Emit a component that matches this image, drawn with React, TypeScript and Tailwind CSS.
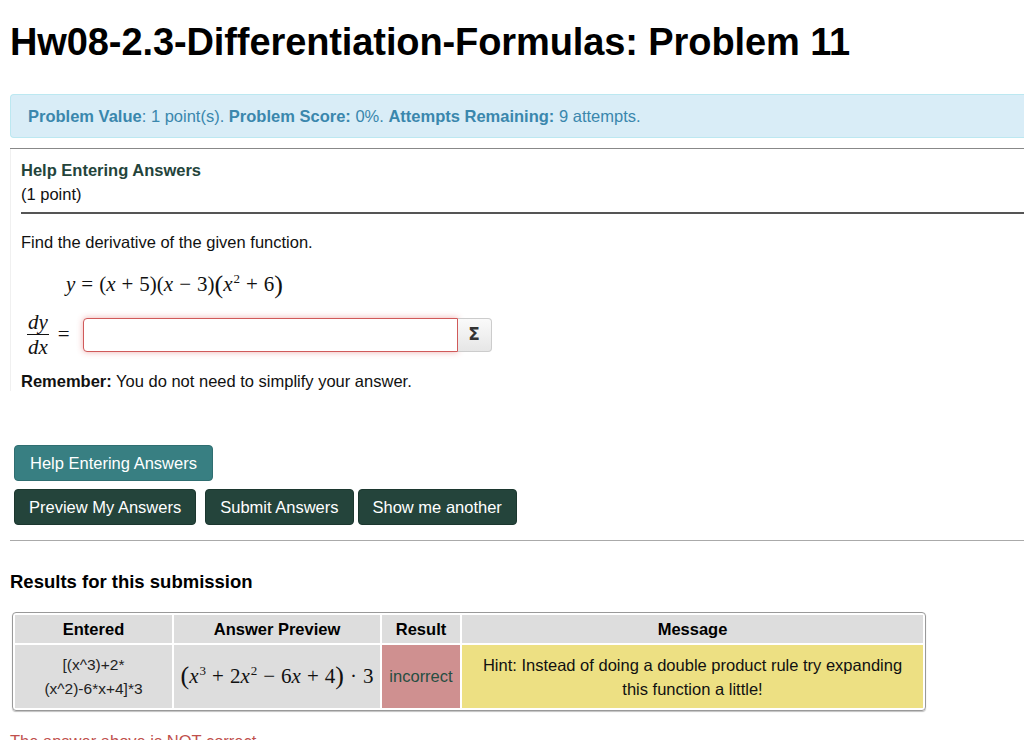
import React from 'react'

const serif = "font-['Liberation_Serif',serif]"

function V({ children }: { children: React.ReactNode }) {
  return <i className="italic">{children}</i>
}

function Sup({ children }: { children: React.ReactNode }) {
  return <span className="text-[13px] align-[8px] ml-[1px] leading-none">{children}</span>
}

function Op({ children }: { children: React.ReactNode }) {
  return <span className="mx-[6px]">{children}</span>
}

function Big({ children }: { children: React.ReactNode }) {
  return <span className="text-[26px] leading-none relative top-[1px]">{children}</span>
}

export default function App() {
  return (
    <div className="min-h-screen bg-white font-['Liberation_Sans',Arial,sans-serif] text-[16.5px] text-[#222] overflow-hidden">
      <h1 className="px-[10px] pt-[20px] text-[38px] leading-[44px] font-bold text-black tracking-[-0.1px]">
        Hw08-2.3-Differentiation-Formulas: Problem 11
      </h1>

      {/* score bar */}
      <div className="ml-[10px] mt-[30px] h-[44px] flex items-center pl-[17px] bg-[#d9edf7] border border-[#bce8f1] rounded-l-[4px] border-r-0 text-[#3a87ad]">
        <span>
          <b>Problem Value</b>: 1 point(s). <b>Problem Score:</b> 0%. <b>Attempts Remaining:</b> 9 attempts.
        </span>
      </div>

      <div className="ml-[10px] mt-[10px] border-t border-[#888]" />

      {/* problem body */}
      <div className="ml-[10px] border-l border-[#f0f0f0] pl-[10px] pt-[9px]">
        <div className="font-bold text-[#24443b] leading-[24px]">Help Entering Answers</div>
        <div className="leading-[24px] text-[#111]">(1 point)</div>
        <div className="mt-[6px] border-t-2 border-[#555]" />

        <div className="pt-[18px] text-[#111]">
          <p className="leading-[20px]">Find the derivative of the given function.</p>

          <div className={`${serif} mt-[19px] ml-[45px] text-[21px] leading-[24px] flex items-center text-[#111] whitespace-nowrap`}>
            <V>y</V>
            <Op>=</Op>
            <span>(<V>x</V><Op>+</Op>5)(<V>x</V><Op>−</Op>3)</span>
            <Big>(</Big>
            <span><V>x</V><Sup>2</Sup><Op>+</Op>6</span>
            <Big>)</Big>
          </div>

          <div className="mt-[14px] flex items-center">
            <div className={`${serif} ml-[6px] flex flex-col items-center text-[21px] italic leading-[22px] text-[#111]`}>
              <span className="px-[1px] pb-[1px] border-b border-[#111]">dy</span>
              <span className="pt-[1px]">dx</span>
            </div>
            <span className={`${serif} text-[21px] ml-[9px] mr-[13px]`}>=</span>
            <div className="w-[375px] h-[34px] border border-[#d05a5a] rounded-l-[4px] bg-white shadow-[0_0_6px_rgba(220,80,80,0.45)]" />
            <div className="w-[34px] h-[34px] flex items-center justify-center border border-[#ccc] border-l-0 rounded-r-[4px] bg-gradient-to-b from-[#fafafa] to-[#e6e6e6]">
              <span className="font-['DejaVu_Sans',sans-serif] font-bold text-[17px] text-[#333]">Σ</span>
            </div>
          </div>

          <p className="mt-[13px] leading-[20px]"><b>Remember:</b> You do not need to simplify your answer.</p>
        </div>
      </div>

      {/* buttons */}
      <div className="pl-[14px] mt-[54px]">
        <button className="h-[36px] px-[15px] rounded-[4px] bg-[#387f82] border border-[#2f6e71] text-white">
          Help Entering Answers
        </button>
        <div className="mt-[8px] flex">
          <button className="h-[36px] px-[14px] rounded-[4px] bg-[#24443b] border border-[#1c372f] text-white">
            Preview My Answers
          </button>
          <button className="ml-[9px] h-[36px] px-[14px] rounded-[4px] bg-[#24443b] border border-[#1c372f] text-white">
            Submit Answers
          </button>
          <button className="ml-[4px] h-[36px] px-[14px] rounded-[4px] bg-[#24443b] border border-[#1c372f] text-white">
            Show me another
          </button>
        </div>
      </div>

      <div className="ml-[10px] mt-[15px] border-t border-[#aaa]" />

      {/* results */}
      <div className="px-[10px] pt-[29px]">
        <h3 className="text-[18.5px] font-bold text-black leading-[24px]">Results for this submission</h3>

        <table className="mt-[18px] ml-[2px] w-[914px] border-separate border-spacing-[2px] border border-[#999] rounded-[4px] shadow-[0_1px_1px_rgba(0,0,0,0.25)]">
          <thead>
            <tr className="h-[28px]">
              <th className="w-[157px] bg-[#ddd] font-bold text-black">Entered</th>
              <th className="w-[206px] bg-[#ddd] font-bold text-black">Answer Preview</th>
              <th className="w-[78px] bg-[#ddd] font-bold text-black">Result</th>
              <th className="bg-[#ddd] font-bold text-black">Message</th>
            </tr>
          </thead>
          <tbody>
            <tr className="h-[63px]">
              <td className="bg-[#ddd] text-center text-[15.5px] leading-[24px] text-[#222]">
                [(x^3)+2*<br />(x^2)-6*x+4]*3
              </td>
              <td className={`${serif} bg-[#ddd] text-center text-[21px] text-[#111] whitespace-nowrap`}>
                <Big>(</Big><V>x</V><Sup>3</Sup><Op>+</Op>2<V>x</V><Sup>2</Sup><Op>−</Op>6<V>x</V><Op>+</Op>4<Big>)</Big><Op>·</Op>3
              </td>
              <td className="bg-[#cf9090] text-center text-[#264e42]">incorrect</td>
              <td className="bg-[#ede083] text-center leading-[24px] text-[#111] px-[10px]">
                Hint: Instead of doing a double product rule try expanding<br />this function a little!
              </td>
            </tr>
          </tbody>
        </table>

        <p className="mt-[20px] text-[#c0504d] leading-[20px]">The answer above is NOT correct.</p>
      </div>
    </div>
  )
}
